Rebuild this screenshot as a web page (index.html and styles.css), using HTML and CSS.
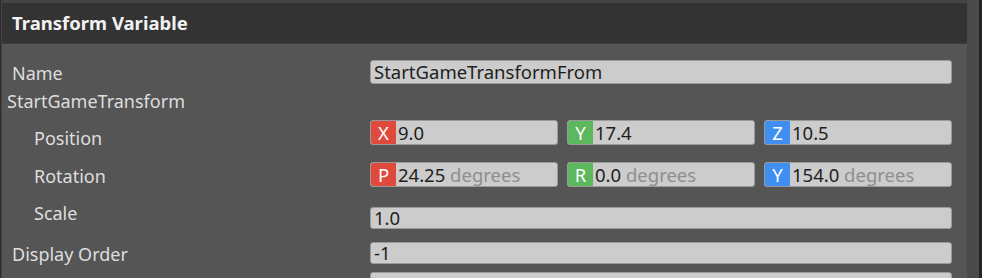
FILE: index.html
```html
<!DOCTYPE html>
<html>
<head>
<meta charset="utf-8">
<link rel="stylesheet" href="styles.css">
</head>
<body>
<div class="frame">
  <div class="edge"></div>
  <div class="panel">
    <div class="header">Transform Variable</div>
    <div class="body">
      <div class="row row-name">
        <div class="label">Name</div>
        <div class="field"><div class="input">StartGameTransformFrom</div></div>
      </div>
      <div class="row row-group">
        <div class="label group">StartGameTransform</div>
      </div>
      <div class="row row-pos">
        <div class="label sub">Position</div>
        <div class="field vec">
          <div class="input"><span class="badge red">X</span><span class="val">9.0</span></div>
          <div class="input"><span class="badge green">Y</span><span class="val">17.4</span></div>
          <div class="input"><span class="badge blue">Z</span><span class="val">10.5</span></div>
        </div>
      </div>
      <div class="row row-rot">
        <div class="label sub">Rotation</div>
        <div class="field vec">
          <div class="input"><span class="badge red">P</span><span class="val">24.25 <span class="unit">degrees</span></span></div>
          <div class="input"><span class="badge green">R</span><span class="val">0.0 <span class="unit">degrees</span></span></div>
          <div class="input"><span class="badge blue">Y</span><span class="val">154.0 <span class="unit">degrees</span></span></div>
        </div>
      </div>
      <div class="row row-scale">
        <div class="label sub">Scale</div>
        <div class="field"><div class="input">1.0</div></div>
      </div>
      <div class="row row-order">
        <div class="label">Display Order</div>
        <div class="field"><div class="input">-1</div></div>
      </div>
      <div class="row row-next">
        <div class="label"></div>
        <div class="field"><div class="input"></div></div>
      </div>
    </div>
  </div>
  <div class="scroll"></div>
  <div class="outer"></div>
</div>
</body>
</html>
```
FILE: styles.css
```css
html, body {
  margin: 0;
  padding: 0;
  background: #444444;
  overflow: hidden;
}
.frame {
  display: flex;
  width: 982px;
  height: 278px;
  font-family: "Noto Sans", "Open Sans", sans-serif;
}
.edge {
  width: 1px;
  background: #2c2c2c;
}
.panel {
  flex: 1;
  margin-top: 3px;
  margin-left: 1px;
  background: #555555;
  display: flex;
  flex-direction: column;
  overflow: hidden;
}
.scroll {
  width: 12px;
  background: #4a4a4a;
}
.outer {
  width: 3px;
  background: #232323;
}
.header {
  height: 40px;
  flex: none;
  background: #333333;
  border-bottom: 1px solid #3c3c3c;
  color: #f2f2f2;
  font-weight: bold;
  font-size: 18.5px;
  line-height: 40px;
  padding-left: 10px;
}
.body {
  display: flex;
  flex-direction: column;
  padding: 16px 15px 0 0;
}
.row {
  display: flex;
  align-items: flex-start;
  flex: none;
}
.label {
  width: 368px;
  padding-left: 10px;
  box-sizing: border-box;
  color: #dedede;
  font-size: 18px;
  line-height: 24px;
  height: 24px;
  flex: none;
}
.label.group { padding-left: 5px; }
.label.sub { padding-left: 32px; }
.field {
  flex: 1;
  display: flex;
}
.vec { gap: 9px; }
.input {
  flex: 1;
  height: 22px;
  background: #cccccc;
  border: 1px solid #9a9a9a;
  border-radius: 3px;
  color: #1e1e1e;
  font-size: 18.5px;
  line-height: 20px;
  padding-left: 3px;
  display: flex;
  align-items: center;
  white-space: nowrap;
}
.vec .input { padding-left: 0; overflow: hidden; }
.badge {
  width: 25px;
  height: 100%;
  flex: none;
  color: #ffffff;
  text-align: center;
  font-size: 18.5px;
  margin-right: 2px;
  display: flex;
  align-items: center;
  justify-content: center;
}
.red { background: #e04a3c; }
.green { background: #5bb85c; }
.blue { background: #3f8ef2; }
.unit { color: #8f8f8f; }

.row-name { height: 24px; }
.row-name .label { margin-top: 1px; }

.row-group { height: 24px; margin-top: 5px; }

.row-pos { height: 30px; margin-top: 7px; }
.row-pos .label { margin-top: 6px; }
.row-pos .input { height: 23px; }

.row-rot { height: 26px; margin-top: 12px; }
.row-rot .label { margin-top: 2px; }
.row-rot .input { height: 23px; }

.row-scale { height: 28px; margin-top: 13px; }
.row-scale .field { margin-top: 6px; }
.row-scale .input { height: 20px; }

.row-order { height: 24px; margin-top: 13px; }
.row-order .input { height: 20px; }

.row-next { height: 24px; margin-top: 6px; }
```
